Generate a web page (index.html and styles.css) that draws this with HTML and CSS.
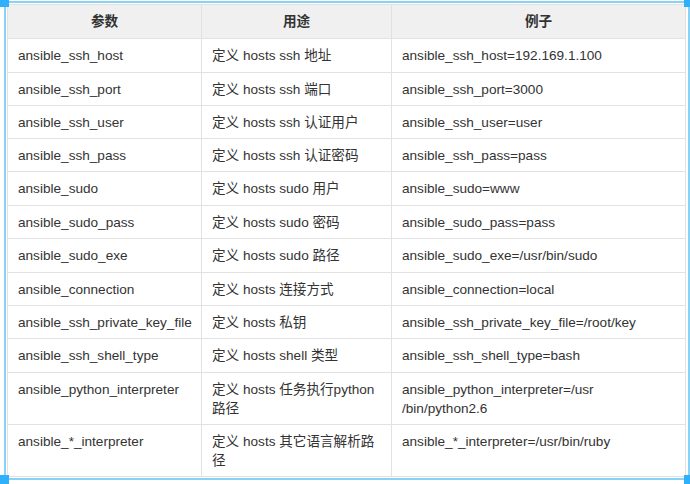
FILE: index.html
```html
<!DOCTYPE html>
<html lang="zh-CN">
<head>
<meta charset="utf-8">
<title>ansible 参数</title>
<link rel="stylesheet" href="styles.css">
</head>
<body>
<div class="frame">
  <span class="handle tl"></span>
  <span class="handle tr"></span>
  <span class="handle bl"></span>
  <span class="handle br"></span>
  <table class="params">
    <colgroup>
      <col class="c1"><col class="c2"><col class="c3">
    </colgroup>
    <thead>
      <tr class="tall"><th>参数</th><th>用途</th><th>例子</th></tr>
    </thead>
    <tbody>
      <tr class="tall"><td>ansible_ssh_host</td><td>定义 hosts ssh 地址</td><td>ansible_ssh_host=192.169.1.100</td></tr>
      <tr><td>ansible_ssh_port</td><td>定义 hosts ssh 端口</td><td>ansible_ssh_port=3000</td></tr>
      <tr><td>ansible_ssh_user</td><td>定义 hosts ssh 认证用户</td><td>ansible_ssh_user=user</td></tr>
      <tr><td>ansible_ssh_pass</td><td>定义 hosts ssh 认证密码</td><td>ansible_ssh_pass=pass</td></tr>
      <tr class="tall"><td>ansible_sudo</td><td>定义 hosts sudo 用户</td><td>ansible_sudo=www</td></tr>
      <tr><td>ansible_sudo_pass</td><td>定义 hosts sudo 密码</td><td>ansible_sudo_pass=pass</td></tr>
      <tr class="tall"><td>ansible_sudo_exe</td><td>定义 hosts sudo 路径</td><td>ansible_sudo_exe=/usr/bin/sudo</td></tr>
      <tr><td>ansible_connection</td><td>定义 hosts 连接方式</td><td>ansible_connection=local</td></tr>
      <tr><td>ansible_ssh_private_key_file</td><td>定义 hosts 私钥</td><td>ansible_ssh_private_key_file=/root/key</td></tr>
      <tr class="tall"><td>ansible_ssh_shell_type</td><td>定义 hosts shell 类型</td><td>ansible_ssh_shell_type=bash</td></tr>
      <tr><td>ansible_python_interpreter</td><td>定义 hosts 任务执行python 路径</td><td>ansible_python_interpreter=/usr<br>/bin/python2.6</td></tr>
      <tr><td>ansible_*_interpreter</td><td>定义 hosts 其它语言解析路径</td><td>ansible_*_interpreter=/usr/bin/ruby</td></tr>
    </tbody>
  </table>
</div>
</body>
</html>
```
FILE: styles.css
```css
html, body {
  margin: 0;
  padding: 0;
  background: #ffffff;
}
body {
  width: 690px;
  height: 484px;
  overflow: hidden;
  font-family: "Liberation Sans", Arial, "Noto Sans CJK SC", sans-serif;
  color: #333333;
}
.frame {
  position: relative;
  margin: 1px 0 0 4px;
  width: 680px;
  padding: 1px;
  border: 2px solid #86d3f7;
}
.handle {
  position: absolute;
  width: 9px;
  height: 9px;
  background: #2eb0fb;
}
.handle.tl { left: -6px; top: -5px; }
.handle.tr { right: -5px; top: -5px; }
.handle.bl { left: -6px; bottom: -6px; }
.handle.br { right: -5px; bottom: -6px; }

.params {
  width: 678px;
  border-collapse: collapse;
  table-layout: fixed;
  font-size: 13.6px;
  line-height: 19px;
}
.c1 { width: 194px; }
.c2 { width: 190px; }
.c3 { width: 294px; }
.params th,
.params td {
  border: 1px solid #e2e2e2;
  padding: 7px 10px 6px;
  text-align: left;
  vertical-align: top;
}
.params .tall th,
.params .tall td {
  padding-bottom: 7px;
}
.params th {
  background: #f0f0f0;
  font-weight: bold;
  text-align: center;
  color: #333333;
}
```
